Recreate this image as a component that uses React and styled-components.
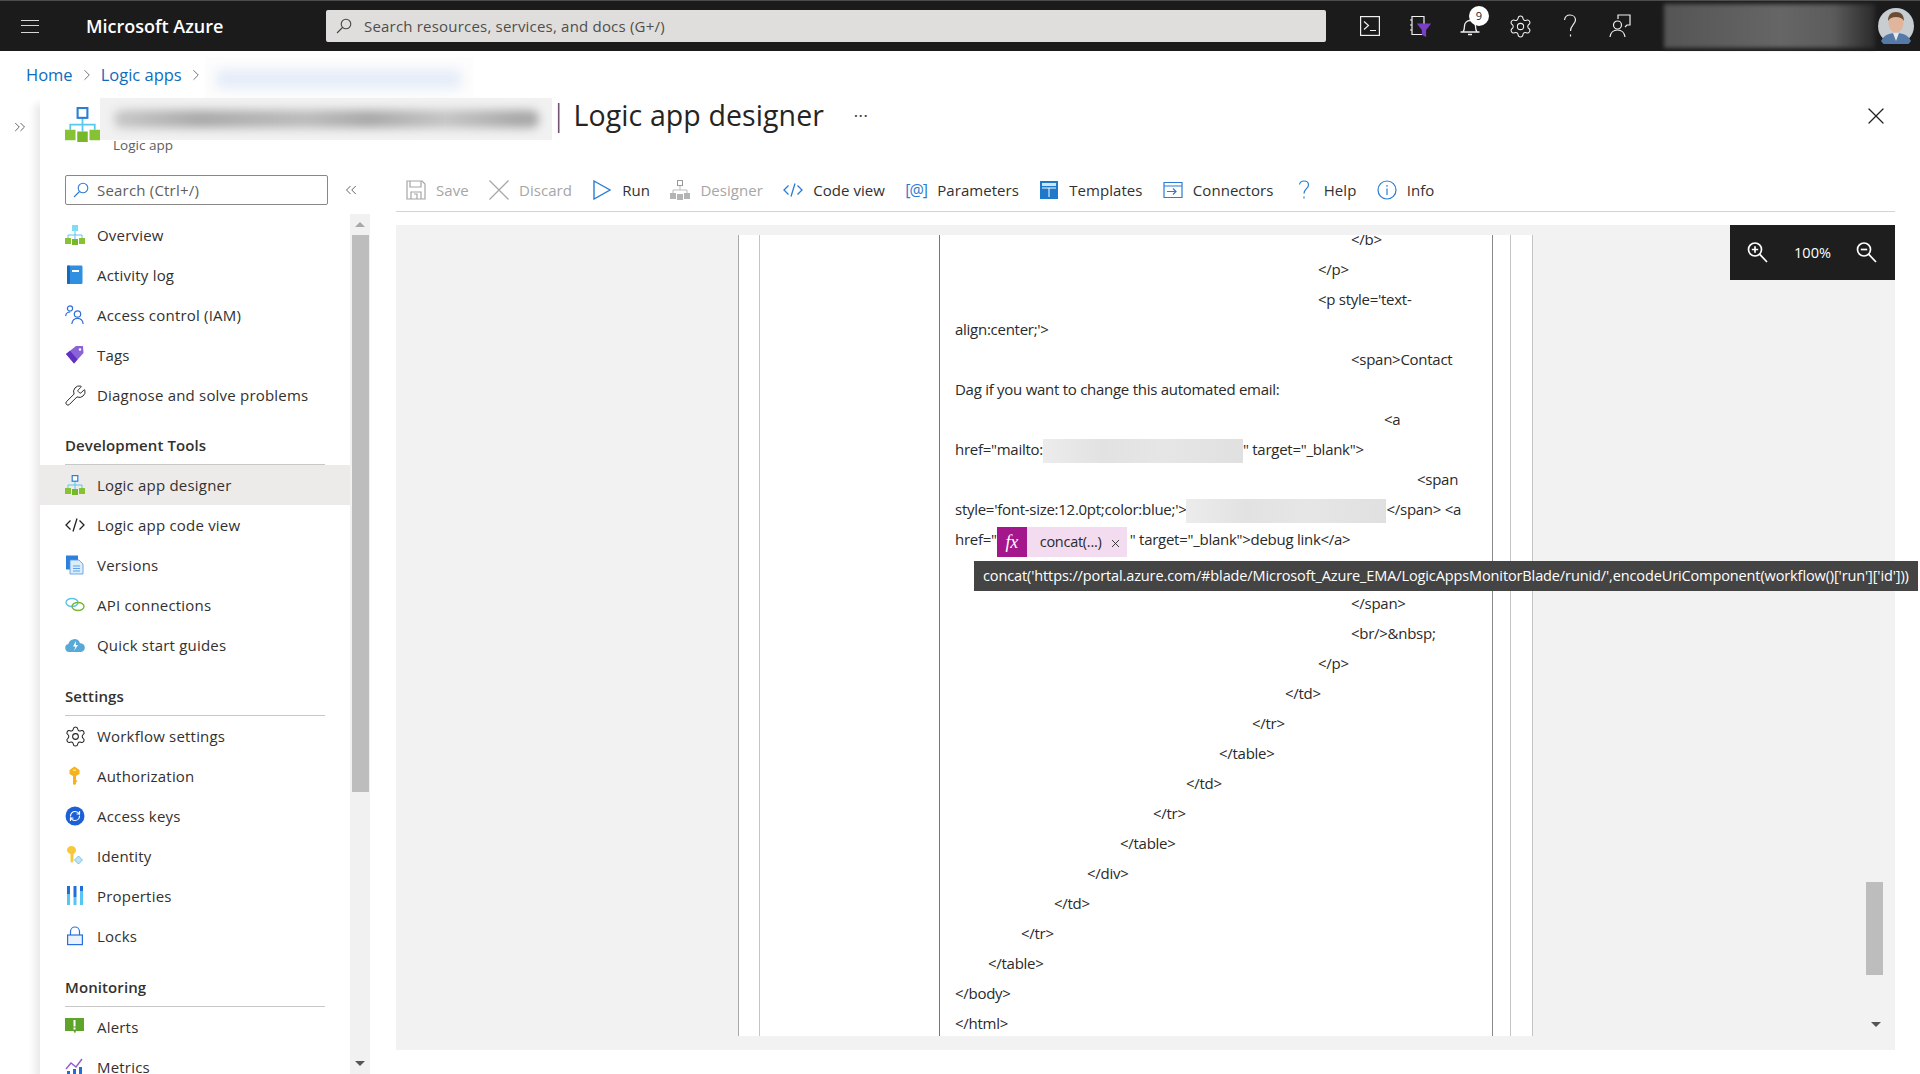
import React from "react";
import styled, { createGlobalStyle } from "styled-components";
import { ChevronRight, ChevronsLeft, ChevronsRight, Settings, Wrench, X, RefreshCw } from "lucide-react";

const FONT = `"Open Sans", "Noto Sans", "Liberation Sans", sans-serif`;

const Global = createGlobalStyle`
  html, body { margin: 0; padding: 0; height: 100%; background: #fff; }
  body { font-family: ${FONT}; color: #323130; overflow: hidden; }
  * { box-sizing: border-box; }
`;

const Page = styled.div`
  height: 1074px;
  display: flex;
  flex-direction: column;
  overflow: hidden;
`;

/* top bar */
const TopBar = styled.header`
  height: 51px;
  flex: none;
  display: flex;
  align-items: center;
  padding-left: 21px;
  background: #1b1b1b;
  border-top: 1px solid #4c4c4c;
`;
const Hamburger = styled.div`
  width: 18px;
  height: 13px;
  border-top: 1.5px solid #d6d6d6;
  border-bottom: 1.5px solid #d6d6d6;
  position: relative;
  &::after {
    content: "";
    position: absolute;
    left: 0;
    right: 0;
    top: 4px;
    height: 1.5px;
    background: #d6d6d6;
  }
`;
const Logo = styled.div`
  width: 240px;
  margin-left: 47px;
  color: #fff;
  font-size: 18px;
  font-weight: 600;
`;
const GlobalSearch = styled.div`
  width: 1000px;
  height: 32px;
  display: flex;
  align-items: center;
  gap: 12px;
  padding-left: 10px;
  background: #dfdedc;
  border-radius: 2px;
  color: #4f4e4d;
  font-size: 15px;
  letter-spacing: 0.2px;
`;
const TopIcons = styled.div`
  display: flex;
  margin-left: 19px;
`;
const TopIcon = styled.div`
  width: 50px;
  height: 50px;
  display: flex;
  align-items: center;
  justify-content: center;
  position: relative;
  color: #f0f0f0;
`;
const Badge = styled.span`
  position: absolute;
  left: 24px;
  top: 5px;
  width: 20px;
  height: 20px;
  border-radius: 50%;
  background: #fff;
  color: #222;
  font-size: 11px;
  line-height: 20px;
  text-align: center;
`;
const AccountBlur = styled.div`
  width: 211px;
  height: 44px;
  margin-left: 19px;
  background: linear-gradient(90deg, #555 0%, #5e5e5e 30%, #666 55%, #5c5c5c 80%, #2a2a2a 100%);
  filter: blur(2px);
`;
const Avatar = styled.svg`
  margin-left: 3px;
  flex: none;
`;

/* breadcrumb */
const Crumbs = styled.nav`
  height: 47px;
  flex: none;
  display: flex;
  align-items: center;
  gap: 5px;
  padding: 0 0 0 26px;
  font-size: 16.5px;
  color: #0f6cbd;
  svg { color: #666; }
`;
const CrumbBlur = styled.div`
  width: 268px;
  height: 44px;
  margin: 8px 0 0 -5px;
  background: #fdfdfd;
  display: flex;
  align-items: center;
  justify-content: center;
  &::after {
    content: "";
    width: 245px;
    height: 18px;
    background: #e4ecf8;
    filter: blur(6px);
  }
`;

/* blade */
const Body = styled.div`
  flex: 1;
  min-height: 0;
  display: flex;
`;
const Rail = styled.div`
  width: 40px;
  flex: none;
  padding: 20px 0 0 11px;
  color: #444;
`;
const Blade = styled.main`
  flex: 1;
  min-width: 0;
  display: flex;
  flex-direction: column;
  background: #fff;
  box-shadow: -5px 6px 8px rgba(0, 0, 0, 0.09);
`;
const BladeHeader = styled.div`
  height: 72px;
  flex: none;
  display: flex;
  padding-left: 25px;
`;
const BladeIcon = styled.div`
  margin-top: 9px;
  flex: none;
`;
const TitleBlock = styled.div`
  display: flex;
  flex-direction: column;
`;
const TitleRow = styled.div`
  display: flex;
  align-items: center;
  height: 42px;
`;
const TitleBlur = styled.div`
  width: 452px;
  height: 42px;
  background: #f1f1f1;
  display: flex;
  align-items: center;
  justify-content: center;
  &::after {
    content: "";
    width: 425px;
    height: 18px;
    border-radius: 8px;
    background: linear-gradient(90deg, #c8c8c8, #a9a9a9 20%, #bbb 45%, #a8a8a8 60%, #c4c4c4 78%, #a8a8a8 95%);
    filter: blur(5px);
  }
`;
const Title = styled.h1`
  margin: -9px 0 0 -1px;
  font-size: 28.5px;
  font-weight: 400;
  letter-spacing: 0.1px;
  color: #252423;
  white-space: nowrap;
  span { color: #1e3a5f; margin-right: 7px; font-weight: 300; }
`;
const More = styled.span`
  margin: -8px 0 0 30px;
  color: #444;
  font-size: 14px;
  font-weight: 600;
  letter-spacing: 1px;
`;
const SubTitle = styled.div`
  margin: -4px 0 0 13px;
  font-size: 13.5px;
  color: #605e5c;
`;
const CloseBtn = styled.div`
  margin: 4px 30px 0 auto;
  color: #222;
`;
const BladeContent = styled.div`
  flex: 1;
  min-height: 0;
  display: flex;
`;

/* left menu */
const Sidebar = styled.aside`
  width: 330px;
  flex: none;
  margin-right: 26px;
  display: flex;
  flex-direction: column;
`;
const SideTop = styled.div`
  height: 44px;
  flex: none;
  display: flex;
  padding: 5px 0 0 25px;
`;
const SideSearch = styled.div`
  width: 263px;
  height: 30px;
  display: flex;
  align-items: center;
  gap: 8px;
  padding-left: 7px;
  border: 1px solid #8a8886;
  border-radius: 2px;
  color: #605e5c;
  font-size: 15px;
  letter-spacing: 0.2px;
`;
const Collapse = styled.div`
  margin: 6px 0 0 14px;
  color: #444;
`;
const MenuArea = styled.div`
  flex: 1;
  min-height: 0;
  display: flex;
  overflow: hidden;
`;
const Menu = styled.div`
  width: 310px;
  flex: none;
  padding-top: 1px;
`;
const MenuRow = styled.div`
  height: 40px;
  display: flex;
  align-items: center;
  gap: 12px;
  padding-left: 25px;
  font-size: 15px;
  letter-spacing: 0.2px;
  color: #323130;
  white-space: nowrap;
  background: ${(p) => (p.$active ? "#edebe9" : "transparent")};
  svg { flex: none; }
`;
const OutlineIcon = styled.span`
  width: 20px;
  height: 20px;
  display: flex;
  align-items: center;
  justify-content: center;
  color: #222;
`;
const SectionHead = styled.div`
  width: 260px;
  height: ${(p) => p.$h || 50}px;
  margin-left: 25px;
  display: flex;
  align-items: flex-end;
  padding-bottom: 9px;
  border-bottom: 1px solid #c8c8c8;
  font-size: 15px;
  letter-spacing: 0.1px;
  font-weight: 600;
  color: #323130;
`;
const ScrollTrack = styled.div`
  width: 20px;
  flex: none;
  display: flex;
  flex-direction: column;
  align-items: center;
  background: #f1f1f1;
`;
const ArrowCell = styled.div`
  height: 21px;
  flex: none;
  display: flex;
  align-items: center;
  justify-content: center;
`;
const Arrow = styled.div`
  width: 0;
  height: 0;
  border-left: 5px solid transparent;
  border-right: 5px solid transparent;
  ${(p) => (p.$down ? "border-top: 5px solid #555;" : "border-bottom: 5px solid #a8a8a8;")}
`;
const ScrollThumb = styled.div`
  width: 17px;
  height: 557px;
  flex: none;
  background: #bdbdbd;
`;
const ScrollRest = styled.div`
  flex: 1;
`;

/* designer */
const Main = styled.section`
  flex: 1;
  min-width: 0;
  margin-right: 25px;
  display: flex;
  flex-direction: column;
`;
const Toolbar = styled.div`
  height: 42px;
  flex: none;
  margin-bottom: 13px;
  display: flex;
  align-items: center;
  gap: 20.3px;
  padding: 0 0 2px 10px;
  border-bottom: 1px solid #d4d4d4;
`;
const ToolBtn = styled.div`
  display: flex;
  align-items: center;
  gap: 10px;
  font-size: 15px;
  letter-spacing: 0.05px;
  white-space: nowrap;
  color: ${(p) => (p.$disabled ? "#a6a6a6" : "#323130")};
`;
const ParamGlyph = styled.span`
  width: 23px;
  margin-right: -1px;
  color: #2b7cd3;
  font-size: 16px;
  letter-spacing: -1px;
`;
const Canvas = styled.div`
  height: 825px;
  flex: none;
  position: relative;
  padding: 10px 0 0 342px;
  background: #f2f2f2;
`;
const Card = styled.div`
  width: 795px;
  height: 801px;
  display: grid;
  grid-template-columns: 21px 180px 553px 18px 23px;
  background: #fff;
  overflow: hidden;
`;
const Column = styled.div`
  border-left: 1px solid ${(p) => p.$line || "#c4c4c4"};
`;
const CodeColumn = styled(Column)`
  border-right: 1px solid #888;
  margin-right: -1px;
`;
const EndColumn = styled.div`
  border-left: 1px solid #c4c4c4;
  border-right: 1px solid #c4c4c4;
`;
const CodeList = styled.div`
  margin-top: -11px;
  color: #2a2a2a;
  font-size: 15px;
  letter-spacing: -0.27px;
`;
const CodeLine = styled.div`
  height: ${(p) => p.$h || 30}px;
  line-height: 30px;
  padding-left: ${(p) => 15 + (p.$indent || 0)}px;
  white-space: pre;
`;
const BlurText = styled.span`
  display: inline-block;
  width: 200px;
  height: 24px;
  vertical-align: middle;
  background: linear-gradient(90deg, #ececec, #e2e2e2 30%, #e6e6e6 60%, #e0e0e0);
`;
const ChipRow = styled(CodeLine)`
  display: flex;
`;
const Chip = styled.div`
  width: 130px;
  height: 30px;
  margin: 3px 3px 0 0;
  display: flex;
  align-items: center;
  background: #f3dbf0;
  font-size: 14.5px;
  position: relative;
`;
const ChipFx = styled.span`
  width: 30px;
  height: 30px;
  margin-right: 13px;
  display: flex;
  align-items: center;
  justify-content: center;
  background: #a4168c;
  color: #fff;
  font-family: "Liberation Serif", serif;
  font-style: italic;
  font-size: 18px;
`;
const ChipClose = styled.span`
  position: absolute;
  right: 5px;
  top: 10px;
  display: flex;
  color: #222;
`;
const Tooltip = styled.div`
  position: absolute;
  left: 578px;
  top: 336px;
  height: 30px;
  width: 944px;
  padding-left: 9px;
  background: #444;
  color: #fff;
  font-size: 14.5px;
  line-height: 30px;
  letter-spacing: -0.115px;
  white-space: nowrap;
  z-index: 5;
`;
const ZoomPanel = styled.div`
  position: absolute;
  right: 0;
  top: 0;
  width: 165px;
  height: 55px;
  display: flex;
  align-items: center;
  justify-content: space-between;
  padding: 0 17px;
  background: #1e1e1e;
  color: #fff;
  font-size: 14.5px;
`;
const CanvasThumb = styled.div`
  position: absolute;
  left: 1470px;
  top: 657px;
  width: 17px;
  height: 93px;
  background: #bdbdbd;
`;
const CanvasArrow = styled.div`
  position: absolute;
  left: 1475px;
  top: 797px;
`;

/* drawn icons */
const LogicIcon = ({ size = 20, top = "#7fdcf5", outline = false }) => (
  <svg width={size} height={size} viewBox="0 0 20 20">
    <path d="M10 6v4M3 13v-3h14v3M10 10v4" stroke="#59c8ee" strokeWidth="1" fill="none" />
    {outline ? (
      <rect x="7.2" y="0.6" width="5.6" height="5.6" fill="#fff" stroke="#2a7fd4" strokeWidth="1.2" />
    ) : (
      <rect x="7" y="0" width="6" height="6" fill={top} />
    )}
    <rect x="0" y="13" width="6" height="6" fill="#86c233" />
    <rect x="7" y="14" width="6" height="6" fill="#76b82a" />
    <rect x="14" y="13" width="6" height="6" fill="#86c233" />
  </svg>
);
const BookIcon = () => (
  <svg width="20" height="20" viewBox="0 0 20 20">
    <rect x="2" y="0.5" width="15.5" height="18.5" rx="1.2" fill="#2f8fe0" />
    <rect x="2" y="0.5" width="3" height="18.5" rx="1" fill="#1a68b8" />
    <rect x="7" y="5" width="7" height="2" fill="#fff" />
  </svg>
);
const PeopleIcon = () => (
  <svg width="20" height="20" viewBox="0 0 20 20" fill="none" stroke="#2c6fdc" strokeWidth="1.2">
    <circle cx="5" cy="3.4" r="2.6" />
    <path d="M0.6 11c.4-3 2-4 4.6-4" />
    <circle cx="12.5" cy="9" r="3.2" />
    <path d="M6.8 19c.5-3.6 2.7-5.6 5.7-5.6s5.2 2 5.7 5.6" />
  </svg>
);
const TagIcon = () => (
  <svg width="20" height="20" viewBox="0 0 20 20">
    <path d="M1 9 L11 1 L18 1 L18.500 8 L9 18.500 Z" fill="#8a63d8" />
    <path d="M1 9 L9 18.500 L12.500 14.500 L5 5.800 Z" fill="#6230c0" />
    <circle cx="15" cy="4.500" r="1.200" fill="#fff" />
  </svg>
);
const CodeIcon = ({ color = "#222", size = 20 }) => (
  <svg width={size} height={size} viewBox="0 0 20 20" fill="none" stroke={color} strokeWidth="1.3">
    <path d="M5.5 5.500 L1 10 L5.500 14.500M14.500 5.500 L19 10 L14.500 14.500M12 3.500 L8 16.500" />
  </svg>
);
const VersionsIcon = () => (
  <svg width="20" height="20" viewBox="0 0 20 20">
    <rect x="1" y="0.5" width="12" height="14" fill="#2d7fdc" />
    <path d="M5 5h9l4 4v10H5z" fill="#dcecfb" stroke="#4d9be6" strokeWidth="0.8" />
    <path d="M8 11h7M8 13.500h7M8 16h7" stroke="#4d9be6" strokeWidth="0.9" />
  </svg>
);
const ApiIcon = () => (
  <svg width="20" height="20" viewBox="0 0 20 20" fill="none" strokeWidth="1.4">
    <ellipse cx="7" cy="7.5" rx="6" ry="4" stroke="#58c4e8" />
    <ellipse cx="13" cy="11.5" rx="6" ry="4" stroke="#7ab833" />
  </svg>
);
const CloudIcon = () => (
  <svg width="20" height="20" viewBox="0 0 20 20">
    <path d="M4 17a4 4 0 0 1-.6-7.900A6 6 0 0 1 15 8.200a4.400 4.400 0 0 1 .8 8.800z" fill="#58a9d6" />
    <path d="M11 6 L8 11.500 L10.500 11.500 L9 16 L13 10 L10.800 10 Z" fill="#fff" />
  </svg>
);
const KeyIcon = () => (
  <svg width="20" height="20" viewBox="0 0 20 20">
    <path d="M9.500 0.500 L14.500 4 V8 L11 10 V14 L12.500 15 L11 16.500 L11 18 L9.500 19 L8 18 V10 L4.500 8 V4 Z" fill="#f5b21c" />
    <rect x="8" y="3.5" width="3" height="1.5" fill="#fde08a" />
  </svg>
);
const SyncIcon = () => (
  <svg width="20" height="20" viewBox="0 0 20 20">
    <circle cx="10" cy="10" r="9.5" fill="#1c60d8" />
    <g transform="translate(4 4)" color="#fff">
      <RefreshCw size={12} strokeWidth={2.4} />
    </g>
  </svg>
);
const IdentityIcon = () => (
  <svg width="20" height="20" viewBox="0 0 20 20">
    <path d="M2 4a4.500 4 0 0 1 9 0c0 2-1.300 3.400-2.500 4v7L7 17l-1.500-1.500V8C3.500 7.400 2 6 2 4z" fill="#f7c93a" />
    <path d="M13.500 10l4 4-4 4-4-4z" fill="#bfe4f6" stroke="#5cb5e4" strokeWidth="0.8" />
  </svg>
);
const BarsIcon = () => (
  <svg width="20" height="20" viewBox="0 0 20 20">
    <rect x="2" y="0" width="3" height="8" fill="#1f6fd6" />
    <rect x="2" y="8" width="3" height="11" fill="#56c5f1" />
    <rect x="8.5" y="0" width="3" height="11" fill="#1f6fd6" />
    <rect x="8.5" y="11" width="3" height="8" fill="#56c5f1" />
    <rect x="15" y="0" width="3" height="5" fill="#1f6fd6" />
    <rect x="15" y="5" width="3" height="14" fill="#56c5f1" />
  </svg>
);
const LockIcon = () => (
  <svg width="20" height="20" viewBox="0 0 20 20" fill="none" stroke="#2c6fdc" strokeWidth="1.2">
    <rect x="2.6" y="9" width="14.8" height="9.6" fill="#eaf2fd" />
    <path d="M5.500 9V5.500a4.500 4.500 0 0 1 9 0V9" />
  </svg>
);
const AlertIcon = () => (
  <svg width="20" height="20" viewBox="0 0 20 20">
    <path d="M0 1h19v13H11l-1 2.500L8.500 14H0z" fill="#5ea32a" />
    <rect x="8.5" y="3" width="2" height="6.5" fill="#fff" />
    <rect x="8.5" y="10.5" width="2" height="2" fill="#fff" />
  </svg>
);
const MetricsIcon = () => (
  <svg width="20" height="20" viewBox="0 0 20 20">
    <path d="M1 12 L6 6 L11 10 L17 2" stroke="#8e5bd8" strokeWidth="1.4" fill="none" />
    <rect x="2" y="14" width="3" height="6" fill="#1f6fd6" />
    <rect x="8" y="12" width="3" height="8" fill="#1f6fd6" />
    <rect x="14" y="10" width="3" height="10" fill="#1f6fd6" />
  </svg>
);
const Lens = ({ size = 16, color = "#444", width = 1.1 }) => (
  <svg width={size} height={size} viewBox="0 0 16 16" fill="none" stroke={color} strokeWidth={width}>
    <circle cx="10" cy="6" r="4.8" />
    <path d="M6.500 9.500 L1 15" />
  </svg>
);
const ZoomLens = ({ plus }) => (
  <svg width="22" height="24" viewBox="0 0 22 24" fill="none" stroke="#fff" strokeWidth="1.7">
    <circle cx="8" cy="8.5" r="6.5" />
    <path d={plus ? "M4.800 8.500h6.400M8 5.300v6.400" : "M4.800 8.500h6.400"} />
    <path d="M12.800 13.300 L20 21" />
  </svg>
);

const menuTop = [
  [<LogicIcon />, "Overview"],
  [<BookIcon />, "Activity log"],
  [<PeopleIcon />, "Access control (IAM)"],
  [<TagIcon />, "Tags"],
  [<OutlineIcon><Wrench size={23} strokeWidth={1} /></OutlineIcon>, "Diagnose and solve problems"],
];
const menuDev = [
  [<LogicIcon outline />, "Logic app designer", true],
  [<CodeIcon />, "Logic app code view"],
  [<VersionsIcon />, "Versions"],
  [<ApiIcon />, "API connections"],
  [<CloudIcon />, "Quick start guides"],
];
const menuSettings = [
  [<OutlineIcon><Settings size={23} strokeWidth={1.1} /></OutlineIcon>, "Workflow settings"],
  [<KeyIcon />, "Authorization"],
  [<SyncIcon />, "Access keys"],
  [<IdentityIcon />, "Identity"],
  [<BarsIcon />, "Properties"],
  [<LockIcon />, "Locks"],
];
const menuMonitoring = [
  [<AlertIcon />, "Alerts"],
  [<MetricsIcon />, "Metrics"],
];

const renderRows = (rows) =>
  rows.map(([icon, label, active]) => (
    <MenuRow key={label} $active={active}>
      {icon}
      <span>{label}</span>
    </MenuRow>
  ));

const BLUE = "#2b7cd3";
const GREY = "#a6a6a6";

const tools = [
  {
    label: "Save",
    disabled: true,
    icon: (
      <svg width="20" height="20" viewBox="0 0 20 20" fill="none" stroke={GREY} strokeWidth="1.2">
        <path d="M1 1h15l3 3v15H1z" />
        <path d="M4 1v6h11V1M5 19v-7h10v7M8 14h3v5" />
      </svg>
    ),
  },
  {
    label: "Discard",
    disabled: true,
    icon: (
      <svg width="20" height="20" viewBox="0 0 20 20" stroke={GREY} strokeWidth="1.2">
        <path d="M0.500 0.500 L19.500 19.500M19.500 0.500 L0.500 19.500" />
      </svg>
    ),
  },
  {
    label: "Run",
    icon: (
      <svg width="20" height="20" viewBox="0 0 20 20" fill="none" stroke={BLUE} strokeWidth="1.4">
        <path d="M2 1 L18 10 L2 19 Z" />
      </svg>
    ),
  },
  {
    label: "Designer",
    disabled: true,
    icon: (
      <svg width="20" height="20" viewBox="0 0 20 20" fill="#b4b4b4">
        <rect x="7.5" y="0.5" width="5" height="5" fill="none" stroke="#999" />
        <path d="M10 6v4M3 13v-3h14v3" stroke="#bbb" fill="none" />
        <rect x="0" y="13" width="6" height="6" />
        <rect x="7" y="14" width="6" height="6" />
        <rect x="14" y="13" width="6" height="6" />
      </svg>
    ),
  },
  { label: "Code view", icon: <CodeIcon color={BLUE} /> },
  { label: "Parameters", icon: <ParamGlyph>[@]</ParamGlyph> },
  {
    label: "Templates",
    icon: (
      <svg width="20" height="20" viewBox="0 0 20 20">
        <rect x="1" y="1" width="18" height="18" fill="#1f78c8" />
        <rect x="3" y="3" width="14" height="3" fill="#cfe6fa" />
        <path d="M3 8h14M10 8v9" stroke="#fff" strokeWidth="1" />
      </svg>
    ),
  },
  {
    label: "Connectors",
    icon: (
      <svg width="20" height="20" viewBox="0 0 20 20" fill="none" stroke={BLUE} strokeWidth="1.2">
        <path d="M1 2.500h18v15H1zM1 6h18" />
        <path d="M4 11.500h9M10 8.500l3 3-3 3" />
      </svg>
    ),
  },
  {
    label: "Help",
    icon: (
      <svg width="20" height="20" viewBox="0 0 20 20" fill="none" stroke={BLUE} strokeWidth="1.2">
        <path d="M5.500 4.500C6 2 8 1 10 1c3 0 4.500 2 4.500 4 0 3.500-4.500 4-4.500 8.500" />
        <path d="M10 16.500v2" />
      </svg>
    ),
  },
  {
    label: "Info",
    icon: (
      <svg width="20" height="20" viewBox="0 0 20 20" fill="none" stroke={BLUE} strokeWidth="1.2">
        <circle cx="10" cy="10" r="9" />
        <path d="M10 8.500v6.500M10 5v1.800" />
      </svg>
    ),
  },
];

const codeBefore = [
  [396, "</b>"],
  [363, "</p>"],
  [363, "<p style='text-"],
  [0, "align:center;'>"],
  [396, "<span>Contact"],
  [0, "Dag if you want to change this automated email:"],
  [429, "<a"],
];
const codeAfter = [
  [396, "</span>"],
  [396, "<br/>&nbsp;"],
  [363, "</p>"],
  [330, "</td>"],
  [297, "</tr>"],
  [264, "</table>"],
  [231, "</td>"],
  [198, "</tr>"],
  [165, "</table>"],
  [132, "</div>"],
  [99, "</td>"],
  [66, "</tr>"],
  [33, "</table>"],
  [0, "</body>"],
  [0, "</html>"],
];

export default function App() {
  return (
    <Page>
      <Global />
      <TopBar>
        <Hamburger />
        <Logo>Microsoft Azure</Logo>
        <GlobalSearch>
          <Lens />
          Search resources, services, and docs (G+/)
        </GlobalSearch>
        <TopIcons>
          <TopIcon>
            <svg width="20" height="20" viewBox="0 0 20 20" fill="none" stroke="currentColor" strokeWidth="1.2">
              <rect x="0.6" y="0.6" width="18.8" height="18.8" />
              <path d="M4 5.500 L8.500 9.500 L4 13.500M10 14.500h6" />
            </svg>
          </TopIcon>
          <TopIcon>
            <svg width="22" height="24" viewBox="0 0 22 24" fill="none" stroke="currentColor" strokeWidth="1.2">
              <path d="M3 2.500h12v18H3zM1 6h2M1 11h2M1 16h2" />
              <path d="M9 10h12l-4.500 6v6l-3-1.500V16z" fill="#7b3fc4" stroke="#7b3fc4" />
            </svg>
          </TopIcon>
          <TopIcon>
            <svg width="22" height="24" viewBox="0 0 22 24" fill="none" stroke="currentColor" strokeWidth="1.3">
              <path d="M4 18c1-1.500 1.500-3 1.500-6a5.500 5.500 0 0 1 11 0c0 3 .5 4.500 1.500 6zM1.500 18h19M9 20.500h4" />
            </svg>
            <Badge>9</Badge>
          </TopIcon>
          <TopIcon>
            <Settings size={25} strokeWidth={1} />
          </TopIcon>
          <TopIcon>
            <svg width="14" height="24" viewBox="0 0 14 24" fill="none" stroke="currentColor" strokeWidth="1.2">
              <path d="M1.500 6C2 2.500 4.500 1 7 1c3.500 0 5.500 2.500 5.500 5C12.500 10 7.500 11 7.500 17" />
              <path d="M7.500 20.500v2" />
            </svg>
          </TopIcon>
          <TopIcon>
            <svg width="22" height="24" viewBox="0 0 22 24" fill="none" stroke="currentColor" strokeWidth="1.2">
              <path d="M9 5V1h12v10h-3l-2 2" />
              <circle cx="8.5" cy="11" r="4" />
              <path d="M1 23c.5-4 3.500-7 7.500-7s7 3 7.500 7" />
            </svg>
          </TopIcon>
        </TopIcons>
        <AccountBlur />
        <Avatar width="36" height="36" viewBox="0 0 36 36">
          <circle cx="18" cy="18" r="18" fill="#c8cdd2" />
          <path d="M3 33c3-6 8-8 15-8s12 2 15 8a18 18 0 0 1-30 0z" fill="#557aa8" />
          <path d="M15 25h6l-3 8z" fill="#e8e8e8" />
          <ellipse cx="18" cy="15" rx="7.5" ry="9.5" fill="#e0b59c" />
          <path d="M10 13c0-6 3-9 8-9s8 3 8 9c-2-3-4-4-8-4s-6 1-8 4z" fill="#6c4b33" />
        </Avatar>
      </TopBar>

      <Crumbs>
        <span>Home</span>
        <ChevronRight size={18} strokeWidth={1.2} />
        <span>Logic apps</span>
        <ChevronRight size={18} strokeWidth={1.2} />
        <CrumbBlur />
      </Crumbs>

      <Body>
        <Rail>
          <ChevronsRight size={18} strokeWidth={1.1} />
        </Rail>
        <Blade>
          <BladeHeader>
            <BladeIcon>
              <LogicIcon size={35} outline />
            </BladeIcon>
            <TitleBlock>
              <TitleRow>
                <TitleBlur />
                <Title>
                  <span>|</span>Logic app designer
                </Title>
                <More>···</More>
              </TitleRow>
              <SubTitle>Logic app</SubTitle>
            </TitleBlock>
            <CloseBtn>
              <X size={28} strokeWidth={1.1} />
            </CloseBtn>
          </BladeHeader>

          <BladeContent>
            <Sidebar>
              <SideTop>
                <SideSearch>
                  <Lens color="#2b7cd3" />
                  Search (Ctrl+/)
                </SideSearch>
                <Collapse>
                  <ChevronsLeft size={18} strokeWidth={1.1} />
                </Collapse>
              </SideTop>
              <MenuArea>
                <Menu>
                  {renderRows(menuTop)}
                  <SectionHead>Development Tools</SectionHead>
                  {renderRows(menuDev)}
                  <SectionHead $h={51}>Settings</SectionHead>
                  {renderRows(menuSettings)}
                  <SectionHead $h={51}>Monitoring</SectionHead>
                  {renderRows(menuMonitoring)}
                </Menu>
                <ScrollTrack>
                  <ArrowCell>
                    <Arrow />
                  </ArrowCell>
                  <ScrollThumb />
                  <ScrollRest />
                  <ArrowCell>
                    <Arrow $down />
                  </ArrowCell>
                </ScrollTrack>
              </MenuArea>
            </Sidebar>

            <Main>
              <Toolbar>
                {tools.map((t) => (
                  <ToolBtn key={t.label} $disabled={t.disabled}>
                    {t.icon}
                    {t.label}
                  </ToolBtn>
                ))}
              </Toolbar>
              <Canvas>
                <Card>
                  <Column $line="#a8a8a8" />
                  <Column />
                  <CodeColumn $line="#777">
                    <CodeList>
                      {codeBefore.map(([indent, text], i) => (
                        <CodeLine key={i} $indent={indent}>
                          {text}
                        </CodeLine>
                      ))}
                      <CodeLine>
                        href="mailto:<BlurText />" target="_blank"&gt;
                      </CodeLine>
                      <CodeLine $indent={462}>&lt;span</CodeLine>
                      <CodeLine>
                        style='font-size:12.0pt;color:blue;'&gt;<BlurText />&lt;/span&gt; &lt;a
                      </CodeLine>
                      <ChipRow $h={64}>
                        href="
                        <Chip>
                          <ChipFx>fx</ChipFx>
                          concat(...)
                          <ChipClose>
                            <X size={13} strokeWidth={1.6} />
                          </ChipClose>
                        </Chip>
                        " target="_blank"&gt;debug link&lt;/a&gt;
                      </ChipRow>
                      {codeAfter.map(([indent, text], i) => (
                        <CodeLine key={i} $indent={indent}>
                          {text}
                        </CodeLine>
                      ))}
                    </CodeList>
                  </CodeColumn>
                  <Column $line="#888" />
                  <EndColumn />
                </Card>
                <Tooltip>
                  concat('https://portal.azure.com/#blade/Microsoft_Azure_EMA/LogicAppsMonitorBlade/runid/',encodeUriComponent(workflow()['run']['id']))
                </Tooltip>
                <ZoomPanel>
                  <ZoomLens plus />
                  100%
                  <ZoomLens />
                </ZoomPanel>
                <CanvasThumb />
                <CanvasArrow>
                  <Arrow $down />
                </CanvasArrow>
              </Canvas>
            </Main>
          </BladeContent>
        </Blade>
      </Body>
    </Page>
  );
}
